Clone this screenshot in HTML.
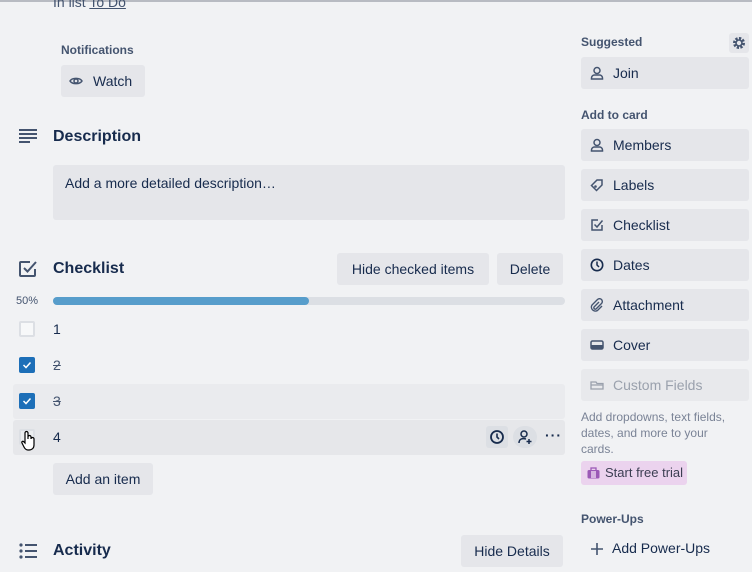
<!DOCTYPE html><html><head><style>
*{box-sizing:border-box;margin:0;padding:0}
body{width:752px;height:572px;overflow:hidden;background:#f1f2f4;font-family:"Liberation Sans",sans-serif;color:#172b4d;position:relative}
.a{position:absolute}
.btn{position:absolute;background:#e5e6ea;border-radius:3px;font-size:14px;color:#172b4d;display:flex;align-items:center}
.sb{left:581px;width:168px;height:32px;padding-left:32px}
.sb svg{position:absolute;left:9px;top:9px}
.lbl{font-size:12px;font-weight:bold;color:#44546f}
.h{font-size:16px;font-weight:bold;color:#172b4d}
.cb{position:absolute;left:19px;width:16px;height:16px;border-radius:2px}
.txt{position:absolute;left:53px;font-size:14px}
</style></head><body>
<div class="a" style="left:0;top:0;width:752px;height:2px;background:#b8bbc2"></div>
<div class="a" style="left:53px;top:-6px;font-size:14px;color:#44546f">In list <u>To Do</u></div>
<div class="a lbl" style="left:61px;top:43px">Notifications</div>
<div class="btn" style="left:61px;top:65px;width:84px;height:32px;padding-left:32px">Watch
<svg class="a" style="left:8px;top:9px" width="14" height="14" viewBox="0 0 14 14"><path d="M1 7C3 3.5 11 3.5 13 7C11 10.5 3 10.5 1 7Z" fill="none" stroke="#44546f" stroke-width="1.5"/><circle cx="7" cy="7" r="2" fill="none" stroke="#44546f" stroke-width="1.5"/></svg></div>
<svg class="a" style="left:19px;top:129px" width="18" height="16"><path d="M0 1H18M0 5H18M0 9H18M0 13H11" stroke="#44546f" stroke-width="2"/></svg>
<div class="a h" style="left:53px;top:128px">Description</div>
<div class="btn" style="left:53px;top:165px;width:512px;height:55px;align-items:flex-start;padding:10px 12px">Add a more detailed description…</div>
<svg class="a" style="left:19px;top:260px" width="18" height="18" viewBox="0 0 18 18"><path d="M16 9V15a1 1 0 0 1-1 1H2a1 1 0 0 1-1-1V3a1 1 0 0 1 1-1h9" fill="none" stroke="#44546f" stroke-width="2"/><path d="M5 8L8.5 11.5L17 2" fill="none" stroke="#44546f" stroke-width="2"/></svg>
<div class="a h" style="left:53px;top:260px">Checklist</div>
<div class="btn" style="left:337px;top:253px;width:152px;height:32px;justify-content:center">Hide checked items</div>
<div class="btn" style="left:497px;top:253px;width:66px;height:32px;justify-content:center">Delete</div>
<div class="a" style="left:16px;top:295px;font-size:11px;color:#44546f">50%</div>
<div class="a" style="left:53px;top:297px;width:512px;height:8px;background:#dcdfe4;border-radius:4px"><div style="width:256px;height:8px;background:#579dcb;border-radius:4px"></div></div>
<div class="a" style="left:13px;top:384px;width:552px;height:35px;background:#eaebee;border-radius:3px"></div>
<div class="a" style="left:13px;top:420px;width:552px;height:35px;background:#e6e7ea;border-radius:3px"></div>
<div class="cb" style="top:321px;border:2px solid #dcdfe4;background:#f7f8f9"></div>
<div class="cb" style="top:357px;background:#1d6fb8"><svg width="16" height="16"><path d="M4.5 8L7 10.5L11.5 5.5" fill="none" stroke="#fff" stroke-width="1.5"/></svg></div>
<div class="cb" style="top:393px;background:#1d6fb8"><svg width="16" height="16"><path d="M4.5 8L7 10.5L11.5 5.5" fill="none" stroke="#fff" stroke-width="1.5"/></svg></div>
<div class="cb" style="top:429px;border:2px solid #dcdfe4;background:#eceef0"></div>
<div class="txt" style="top:321px">1</div>
<div class="txt" style="top:357px;text-decoration:line-through;color:#44546f">2</div>
<div class="txt" style="top:393px;text-decoration:line-through;color:#44546f">3</div>
<div class="txt" style="top:429px">4</div>
<div class="a" style="left:486px;top:426px;width:22px;height:22px;background:#dcdfe4;border-radius:3px"></div>
<svg class="a" style="left:489px;top:429px" width="16" height="16"><circle cx="8" cy="8" r="6" fill="none" stroke="#172b4d" stroke-width="1.8"/><path d="M8 4.5V8L10 10" fill="none" stroke="#172b4d" stroke-width="1.6"/></svg>
<div class="a" style="left:513px;top:426px;width:24px;height:22px;background:#dcdfe4;border-radius:11px"></div>
<svg class="a" style="left:517px;top:429px" width="16" height="16"><circle cx="7" cy="5" r="3" fill="none" stroke="#172b4d" stroke-width="1.5"/><path d="M2 14C2 10 5 9 9 10" fill="none" stroke="#172b4d" stroke-width="1.5"/><path d="M12 10V15M9.5 12.5H14.5" stroke="#172b4d" stroke-width="1.5"/></svg>
<div class="a" style="left:545px;top:427px;font-size:14px;font-weight:bold;letter-spacing:1px">···</div>
<svg class="a" style="left:20px;top:430px" width="18" height="22"><path d="M5 9V3a1.5 1.5 0 0 1 3 0v6V7a1.5 1.5 0 0 1 3 0v2a1.5 1.5 0 0 1 3 0v6c0 3-2 5-5 5H8c-2 0-3-1-4-3L2 13c-.7-1.2.7-2.3 1.7-1.3L5 13Z" fill="#fff" stroke="#000" stroke-width="1.2"/></svg>
<div class="btn" style="left:53px;top:463px;width:100px;height:32px;justify-content:center">Add an item</div>
<svg class="a" style="left:19px;top:543px" width="18" height="16"><g fill="#44546f"><circle cx="2" cy="2" r="1.6"/><circle cx="2" cy="8" r="1.6"/><circle cx="2" cy="14" r="1.6"/></g><path d="M6 2H18M6 8H18M6 14H18" stroke="#44546f" stroke-width="2"/></svg>
<div class="a h" style="left:53px;top:542px">Activity</div>
<div class="btn" style="left:461px;top:535px;width:102px;height:32px;justify-content:center">Hide Details</div>

<div class="a lbl" style="left:581px;top:35px">Suggested</div>
<div class="a" style="left:729px;top:33px;width:20px;height:20px;background:#e5e6ea;border-radius:3px"></div>
<svg class="a" style="left:732px;top:36px" width="14" height="14" viewBox="0 0 14 14"><circle cx="7" cy="7" r="4.5" fill="none" stroke="#44546f" stroke-width="3" stroke-dasharray="2.2 1.3"/><circle cx="7" cy="7" r="3" fill="none" stroke="#44546f" stroke-width="1.6"/></svg>
<div class="btn sb" style="top:57px"><svg width="14" height="14"><circle cx="7" cy="4.5" r="3" fill="none" stroke="#44546f" stroke-width="1.5"/><path d="M1.5 13V12a3 3 0 0 1 3-3h5a3 3 0 0 1 3 3v1Z" fill="none" stroke="#44546f" stroke-width="1.5"/></svg>Join</div>
<div class="a lbl" style="left:581px;top:108px">Add to card</div>
<div class="btn sb" style="top:129px"><svg width="14" height="14"><circle cx="7" cy="4.5" r="3" fill="none" stroke="#44546f" stroke-width="1.5"/><path d="M1.5 13V12a3 3 0 0 1 3-3h5a3 3 0 0 1 3 3v1Z" fill="none" stroke="#44546f" stroke-width="1.5"/></svg>Members</div>
<div class="btn sb" style="top:169px"><svg width="14" height="14"><path d="M1.5 7.5L7 2H12V7L6.5 12.5Z" fill="none" stroke="#44546f" stroke-width="1.5"/><circle cx="5.5" cy="8.5" r="1.3" fill="#44546f"/></svg>Labels</div>
<div class="btn sb" style="top:209px"><svg width="14" height="14"><path d="M12 7V12H2V2H8" fill="none" stroke="#44546f" stroke-width="1.5"/><path d="M4.5 6.5L7 9L12.5 2.5" fill="none" stroke="#44546f" stroke-width="1.5"/></svg>Checklist</div>
<div class="btn sb" style="top:249px"><svg width="14" height="14"><circle cx="7" cy="7" r="5.7" fill="none" stroke="#172b4d" stroke-width="1.6"/><path d="M7 3.5V7L9 9" fill="none" stroke="#172b4d" stroke-width="1.5"/></svg>Dates</div>
<div class="btn sb" style="top:289px"><svg width="14" height="14"><path d="M9 4L4 9a1.5 1.5 0 0 0 2 2L11.5 5.5a2.8 2.8 0 0 0-4-4L2 7a4 4 0 0 0 5.5 5.5L12 8" fill="none" stroke="#44546f" stroke-width="1.4"/></svg>Attachment</div>
<div class="btn sb" style="top:329px"><svg width="14" height="14"><rect x="1" y="3" width="12" height="8" rx="1.5" fill="none" stroke="#44546f" stroke-width="1.5"/><rect x="1" y="7" width="12" height="4" fill="#44546f"/></svg>Cover</div>
<div class="btn sb" style="top:369px;color:#9aa1ad;background:#e8e9ec"><svg width="14" height="14"><path d="M1 4H6L7 5.5H13V11H1Z M1 7H13" fill="none" stroke="#9aa1ad" stroke-width="1.3"/></svg>Custom Fields</div>
<div class="a" style="left:581px;top:409px;font-size:12px;line-height:16px;color:#7a8396;width:160px">Add dropdowns, text fields, dates, and more to your cards.</div>
<div class="a" style="left:581px;top:461px;width:106px;height:24px;background:#ebd3ee;border-radius:3px;font-size:13px;color:#3b3e52;padding:4px 0 0 24px">Start free trial
<svg class="a" style="left:6px;top:6px" width="13" height="12"><rect x="0.5" y="3" width="12" height="8.5" rx="1.5" fill="#9b59b6"/><rect x="4" y="1" width="5" height="3" fill="none" stroke="#9b59b6" stroke-width="1.3"/><rect x="4" y="4" width="5" height="7" fill="#d6b4e0"/></svg></div>
<div class="a lbl" style="left:581px;top:512px">Power-Ups</div>
<div class="a" style="left:590px;top:540px;font-size:14px;padding-left:22px">Add Power-Ups<svg class="a" style="left:0;top:2px" width="14" height="14"><path d="M7 1V13M1 7H13" stroke="#44546f" stroke-width="1.6"/></svg></div>
</body></html>
